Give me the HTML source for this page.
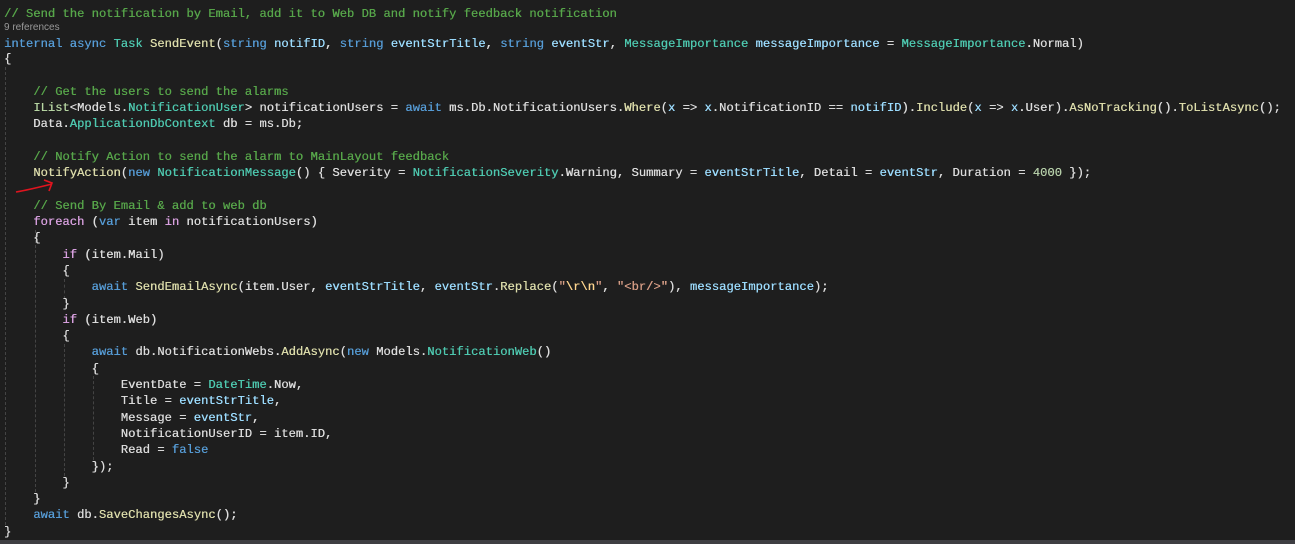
<!DOCTYPE html>
<html><head><meta charset="utf-8"><style>
body{margin:0;width:1295px;height:544px;background:#1e1e1e;overflow:hidden;position:relative;font-family:"Liberation Mono",monospace;font-size:12.17px;color:#dcdcdc}
.l{position:absolute;left:4px;white-space:pre;line-height:16.3px;height:16.3px;text-shadow:0.3px 0 0 currentColor}
.c{color:#57a64a}.k{color:#569cd6}.t{color:#4ec9b0}.m{color:#dcdcaa}.p{color:#9cdcfe}.s{color:#d69d85}.n{color:#b5cea8}.f{color:#d8a0df}.e{color:#ffd68f}.i{color:#b8d7a3}
.ref{position:absolute;left:4px;top:22px;font-family:"Liberation Sans",sans-serif;font-size:10px;color:#999}
.g{position:absolute;width:0;border-left:1px dashed #444}
</style></head><body>
<div class="l" style="top:6px"><span class="c">// Send the notification by Email, add it to Web DB and notify feedback notification</span></div>
<div class="ref">9 references</div>
<div class="l" style="top:36px"><span class="k">internal async</span> <span class="t">Task</span> <span class="m">SendEvent</span>(<span class="k">string</span> <span class="p">notifID</span>, <span class="k">string</span> <span class="p">eventStrTitle</span>, <span class="k">string</span> <span class="p">eventStr</span>, <span class="t">MessageImportance</span> <span class="p">messageImportance</span> = <span class="t">MessageImportance</span>.Normal)</div>
<div class="g" style="left:5px;top:67px;height:458px"></div>
<div class="g" style="left:35px;top:230px;height:262px"></div>
<div class="g" style="left:64px;top:279px;height:20px"></div>
<div class="g" style="left:64px;top:344px;height:132px"></div>
<div class="g" style="left:93px;top:376px;height:84px"></div>
<div id="code" style="position:absolute;left:0;top:51px">
<div class="l" style="top:0px">{</div>
<div class="l" style="top:32.6px">    <span class="c">// Get the users to send the alarms</span></div>
<div class="l" style="top:48.9px">    <span class="i">IList</span>&lt;Models.<span class="t">NotificationUser</span>&gt; notificationUsers = <span class="k">await</span> ms.Db.NotificationUsers.<span class="m">Where</span>(<span class="p">x</span> =&gt; <span class="p">x</span>.NotificationID == <span class="p">notifID</span>).<span class="m">Include</span>(<span class="p">x</span> =&gt; <span class="p">x</span>.User).<span class="m">AsNoTracking</span>().<span class="m">ToListAsync</span>();</div>
<div class="l" style="top:65.2px">    Data.<span class="t">ApplicationDbContext</span> db = ms.Db;</div>
<div class="l" style="top:97.8px">    <span class="c">// Notify Action to send the alarm to MainLayout feedback</span></div>
<div class="l" style="top:114.1px">    <span class="m">NotifyAction</span>(<span class="k">new</span> <span class="t">NotificationMessage</span>() { Severity = <span class="t">NotificationSeverity</span>.Warning, Summary = <span class="p">eventStrTitle</span>, Detail = <span class="p">eventStr</span>, Duration = <span class="n">4000</span> });</div>
<div class="l" style="top:146.7px">    <span class="c">// Send By Email &amp; add to web db</span></div>
<div class="l" style="top:163px">    <span class="f">foreach</span> (<span class="k">var</span> item <span class="f">in</span> notificationUsers)</div>
<div class="l" style="top:179.3px">    {</div>
<div class="l" style="top:195.6px">        <span class="f">if</span> (item.Mail)</div>
<div class="l" style="top:211.9px">        {</div>
<div class="l" style="top:228.2px">            <span class="k">await</span> <span class="m">SendEmailAsync</span>(item.User, <span class="p">eventStrTitle</span>, <span class="p">eventStr</span>.<span class="m">Replace</span>(<span class="s">"</span><span class="e">\r\n</span><span class="s">"</span>, <span class="s">"&lt;br/&gt;"</span>), <span class="p">messageImportance</span>);</div>
<div class="l" style="top:244.5px">        }</div>
<div class="l" style="top:260.8px">        <span class="f">if</span> (item.Web)</div>
<div class="l" style="top:277.1px">        {</div>
<div class="l" style="top:293.4px">            <span class="k">await</span> db.NotificationWebs.<span class="m">AddAsync</span>(<span class="k">new</span> Models.<span class="t">NotificationWeb</span>()</div>
<div class="l" style="top:309.7px">            {</div>
<div class="l" style="top:326px">                EventDate = <span class="t">DateTime</span>.Now,</div>
<div class="l" style="top:342.3px">                Title = <span class="p">eventStrTitle</span>,</div>
<div class="l" style="top:358.6px">                Message = <span class="p">eventStr</span>,</div>
<div class="l" style="top:374.9px">                NotificationUserID = item.ID,</div>
<div class="l" style="top:391.2px">                Read = <span class="k">false</span></div>
<div class="l" style="top:407.5px">            });</div>
<div class="l" style="top:423.8px">        }</div>
<div class="l" style="top:440.1px">    }</div>
<div class="l" style="top:456.4px">    <span class="k">await</span> db.<span class="m">SaveChangesAsync</span>();</div>
<div class="l" style="top:472.7px">}</div>
</div>
<svg style="position:absolute;left:0;top:0" width="1295" height="544">
<path d="M16 192 C28 190 40 187 52 184 M44 180 L52 183 L49 191" stroke="#e0141e" stroke-width="1.6" fill="none"/>
<rect x="0" y="540" width="1295" height="4" fill="#3e3e42"/>
</svg>
</body></html>
